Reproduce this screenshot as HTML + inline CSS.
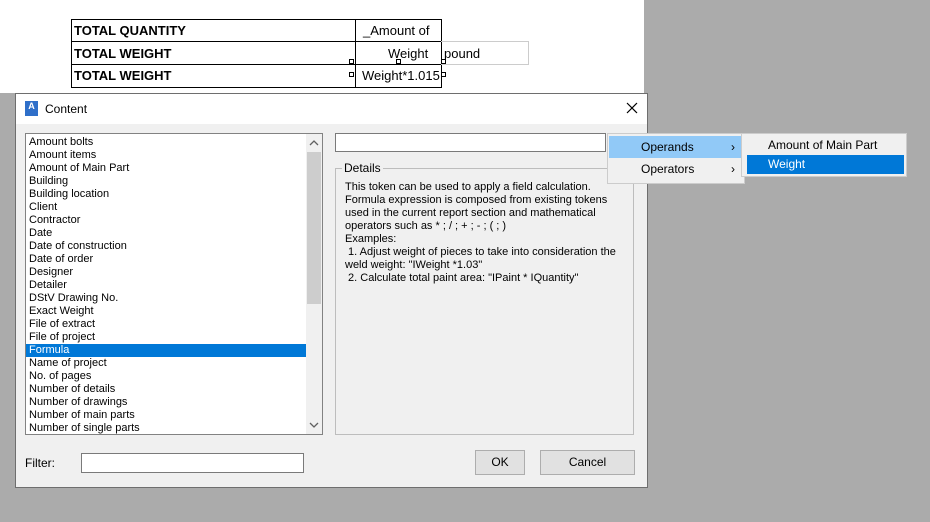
<!DOCTYPE html>
<html><head><style>
*{margin:0;padding:0;box-sizing:border-box}
body{width:930px;height:522px;background:#ababab;position:relative;overflow:hidden;font-family:"Liberation Sans",Arial,sans-serif;font-size:12px;color:#000}
.a{position:absolute}
.list div{height:13px;line-height:13px;padding-left:3px;white-space:nowrap;font-size:11px}
.det{font-size:11px;line-height:13px}
</style></head><body>
<div class="a" style="left:0;top:0;width:644px;height:93px;background:#fff"></div>
<div class="a" style="left:71px;top:19px;width:371px;height:23px;border:1px solid #000"></div>
<div class="a" style="left:71px;top:41px;width:371px;height:24px;border:1px solid #000"></div>
<div class="a" style="left:71px;top:64px;width:371px;height:24px;border:1px solid #000"></div>
<div class="a" style="left:355px;top:19px;width:1px;height:69px;background:#000"></div>
<div class="a" style="left:441px;top:41px;width:88px;height:24px;border:1px solid #ccc;border-left:none"></div>
<div class="a" style="left:74px;top:23px;font-weight:bold;font-size:13px">TOTAL QUANTITY</div>
<div class="a" style="left:74px;top:46px;font-weight:bold;font-size:13px">TOTAL WEIGHT</div>
<div class="a" style="left:74px;top:68px;font-weight:bold;font-size:13px">TOTAL WEIGHT</div>
<div class="a" style="left:363px;top:23px;font-size:13px">_Amount of</div>
<div class="a" style="left:388px;top:46px;font-size:13px">Weight</div>
<div class="a" style="left:444px;top:46px;font-size:13px">pound</div>
<div class="a" style="left:362px;top:68px;font-size:13px">Weight*1.015</div>
<div class="a" style="left:349px;top:59px;width:5px;height:5px;border:1px solid #000;background:#fff"></div>
<div class="a" style="left:396px;top:59px;width:5px;height:5px;border:1px solid #000;background:#fff"></div>
<div class="a" style="left:441px;top:59px;width:5px;height:5px;border:1px solid #000;background:#fff"></div>
<div class="a" style="left:349px;top:72px;width:5px;height:5px;border:1px solid #000;background:#fff"></div>
<div class="a" style="left:441px;top:72px;width:5px;height:5px;border:1px solid #000;background:#fff"></div>

<div class="a" style="left:15px;top:93px;width:633px;height:395px;background:#f0f0f0;border:1px solid #6e6e6e"></div>
<div class="a" style="left:16px;top:94px;width:631px;height:30px;background:#fff"></div>
<div class="a" style="left:25px;top:101px;width:13px;height:15px;background:#2f6fc9;color:#fff;font-size:9px;font-weight:bold;text-align:center;line-height:10px">A</div>
<div class="a" style="left:45px;top:102px;font-size:12px">Content</div>
<svg class="a" style="left:626px;top:102px" width="12" height="12"><path d="M1 1L11 11M11 1L1 11" stroke="#000" stroke-width="1.2"/></svg>

<div class="a" style="left:25px;top:133px;width:298px;height:302px;background:#fff;border:1px solid #828282"></div>
<div class="a list" style="left:26px;top:136px;width:280px">
<div>Amount bolts</div><div>Amount items</div><div>Amount of Main Part</div><div>Building</div><div>Building location</div><div>Client</div><div>Contractor</div><div>Date</div><div>Date of construction</div><div>Date of order</div><div>Designer</div><div>Detailer</div><div>DStV Drawing No.</div><div>Exact Weight</div><div>File of extract</div><div>File of project</div><div style="background:#0078d7;color:#fff">Formula</div><div>Name of project</div><div>No. of pages</div><div>Number of details</div><div>Number of drawings</div><div>Number of main parts</div><div>Number of single parts</div>
</div>
<div class="a" style="left:306px;top:134px;width:16px;height:300px;background:#f0f0f0"></div>
<div class="a" style="left:307px;top:152px;width:14px;height:152px;background:#cdcdcd"></div>
<svg class="a" style="left:309px;top:139px" width="10" height="8"><path d="M1 6L5 2L9 6" stroke="#606060" fill="none" stroke-width="1.3"/></svg>
<svg class="a" style="left:309px;top:421px" width="10" height="8"><path d="M1 2L5 6L9 2" stroke="#606060" fill="none" stroke-width="1.3"/></svg>

<div class="a" style="left:335px;top:133px;width:271px;height:19px;background:#fff;border:1px solid #7a7a7a"></div>
<div class="a" style="left:335px;top:168px;width:299px;height:267px;border:1px solid #bdbdbd"></div>
<div class="a" style="left:342px;top:161px;background:#f0f0f0;padding:0 2px">Details</div>
<div class="a det" style="left:345px;top:181px;width:288px">This token can be used to apply a field calculation.<br>Formula expression is composed from existing tokens used in the current report section and mathematical operators such as * ; / ; + ; - ; ( ; )<br>Examples:<br>&nbsp;1. Adjust weight of pieces to take into consideration the weld weight: "IWeight *1.03"<br>&nbsp;2. Calculate total paint area: "IPaint * IQuantity"</div>

<div class="a" style="left:607px;top:133px;width:138px;height:51px;background:#f0f0f0;border:1px solid #ccc"></div>
<div class="a" style="left:609px;top:136px;width:133px;height:22px;background:#91c9f7"></div>
<div class="a" style="left:641px;top:140px">Operands</div><div class="a" style="left:731px;top:140px">›</div>
<div class="a" style="left:641px;top:162px">Operators</div><div class="a" style="left:731px;top:162px">›</div>
<div class="a" style="left:741px;top:133px;width:166px;height:44px;background:#f0f0f0;border:1px solid #ccc"></div>
<div class="a" style="left:747px;top:155px;width:157px;height:19px;background:#0078d7"></div>
<div class="a" style="left:768px;top:138px">Amount of Main Part</div>
<div class="a" style="left:768px;top:157px;color:#fff">Weight</div>

<div class="a" style="left:25px;top:456px">Filter:</div>
<div class="a" style="left:81px;top:453px;width:223px;height:20px;background:#fff;border:1px solid #7a7a7a"></div>
<div class="a" style="left:475px;top:450px;width:50px;height:25px;background:#e1e1e1;border:1px solid #adadad;text-align:center;line-height:23px">OK</div>
<div class="a" style="left:540px;top:450px;width:95px;height:25px;background:#e1e1e1;border:1px solid #adadad;text-align:center;line-height:23px">Cancel</div>
</body></html>
